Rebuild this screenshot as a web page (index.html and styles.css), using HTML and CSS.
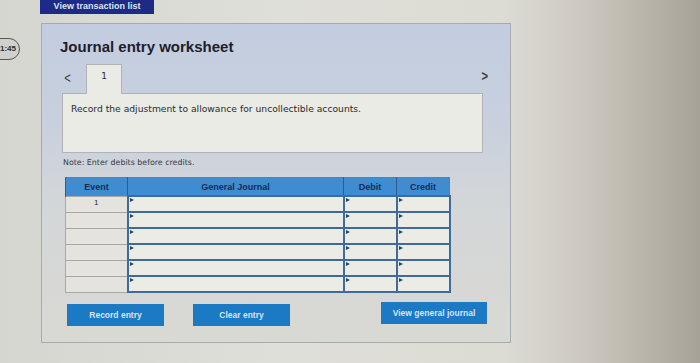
FILE: index.html
```html
<!DOCTYPE html>
<html lang="en">
<head>
  <meta charset="UTF-8">
  <meta name="viewport" content="width=device-width, initial-scale=1.0">
  <title>Journal entry worksheet</title>
  <link rel="stylesheet" href="styles.css">
</head>
<body>
  <div class="topbar">
    <button class="btn-dark">View transaction list</button>
  </div>
  <div class="timer">1:45</div>
  <div class="panel">
    <div class="panel-head">
      <h2>Journal entry worksheet</h2>
      <div class="tabs">
        <span class="arrow">&lt;</span>
        <span class="tab">1</span>
        <span class="arrow next">&gt;</span>
      </div>
    </div>
    <div class="task">Record the adjustment to allowance for uncollectible accounts.</div>
    <div class="panel-body">
      <p class="note">Note: Enter debits before credits.</p>
      <table class="journal">
        <thead>
          <tr><th class="c-event">Event</th><th class="c-gj">General Journal</th><th class="c-amt">Debit</th><th class="c-amt">Credit</th></tr>
        </thead>
        <tbody id="rows"></tbody>
      </table>
      <div class="actions">
        <button class="btn">Record entry</button>
        <button class="btn">Clear entry</button>
        <button class="btn right">View general journal</button>
      </div>
    </div>
  </div>
  <script>
    const rows = document.getElementById("rows");
    for (let i = 0; i < 6; i++) {
      rows.innerHTML += `
        <tr>
          <td class="event">${i === 0 ? "1" : ""}</td>
          <td class="input"><div class="field"></div></td>
          <td class="input"><div class="field"></div></td>
          <td class="input"><div class="field"></div></td>
        </tr>`;
    }
  </script>
</body>
</html>
```

FILE: styles.css
```css
body {
  margin: 0;
  padding: 0;
  font-family: "DejaVu Sans", Verdana, sans-serif;
  color: #2b2b33;
  height: 363px;
  overflow: hidden;
  position: relative;
  background: linear-gradient(to right, #d6d6d0 0%, #dfdfd9 40%, #dcdbd4 72%, #cbc7be 84%, #a7a297 100%);
}
.topbar {
  display: flow-root;
  padding-left: 40px;
  height: 23px;
}
.btn-dark {
  display: block;
  width: 114px;
  height: 22px;
  margin-top: -8px;
  padding: 6px 0 0;
  border: none;
  background-color: #1d2a86;
  color: #dfe3f2;
  font-family: "Liberation Sans", Arial, sans-serif;
  font-weight: bold;
  font-size: 9px;
}
.timer {
  position: absolute;
  left: -14px;
  top: 38px;
  width: 29px;
  height: 20px;
  border: 1px solid #55555a;
  border-radius: 11px;
  background-color: #d0d0cc;
  font-family: "Liberation Sans", Arial, sans-serif;
  font-size: 8px;
  font-weight: bold;
  line-height: 20px;
  text-align: right;
  padding-right: 3px;
  box-sizing: content-box;
}
.panel {
  margin-left: 41px;
  width: 470px;
  height: 320px;
  border: 1px solid #a6aab2;
  box-sizing: border-box;
  background: linear-gradient(to bottom, #c3cde0 0%, #c8d0de 30%, #d3d6d9 55%, #d9d9d3 100%);
}
.panel-head {
  height: 69px;
  padding: 0 0 0 18px;
}
.panel-head h2 {
  margin: 0;
  padding-top: 14px;
  font-family: "Liberation Sans", Arial, sans-serif;
  font-size: 15px;
  font-weight: bold;
  color: #1e1e2a;
}
.tabs {
  display: flex;
  align-items: flex-end;
  margin-top: 8px;
  height: 30px;
}
.arrow {
  font-family: "Liberation Sans", Arial, sans-serif;
  font-size: 14px;
  color: #3a3a44;
  width: 24px;
  padding-left: 2px;
  align-self: center;
  transform: scaleX(0.8);
}
.tab {
  width: 36px;
  height: 30px;
  margin-bottom: -1px;
  background-color: #ebebe5;
  border: 1px solid #b0b2b4;
  border-bottom: none;
  box-sizing: border-box;
  font-size: 9px;
  text-align: center;
  padding-top: 6px;
  position: relative;
  z-index: 1;
}
.arrow.next {
  margin-left: auto;
  margin-right: 21px;
  width: auto;
  align-self: center;
  margin-bottom: 4px;
  font-weight: bold;
}
.task {
  margin-left: 20px;
  width: 421px;
  height: 60px;
  box-sizing: border-box;
  background-color: #ebebe5;
  border: 1px solid #b0b2b4;
  padding: 9px 0 0 8px;
  font-size: 9.2px;
  color: #2a2a30;
}
.panel-body {
  padding: 0 0 0 21px;
}
.note {
  margin: 5px 0 0;
  font-size: 7.9px;
  color: #3a3a40;
}
.journal {
  margin-top: 10px;
  margin-left: 2px;
  border-collapse: collapse;
  width: 380px;
  table-layout: fixed;
  border: 1px solid #6a7c90;
}
.journal th {
  height: 17px;
  padding: 0;
  background-color: #3e8cd2;
  color: #1a2a55;
  font-family: "Liberation Sans", Arial, sans-serif;
  font-size: 9px;
  font-weight: bold;
  border-left: 1px solid #2a5d92;
}
.c-event { width: 61px; }
.c-gj { width: 215px; }
.c-amt { width: 52px; }
.journal td {
  padding: 0;
  height: 14px;
}
.journal td.event {
  background-color: #e4e3dd;
  border: 1px solid #a6a8aa;
  text-align: center;
  vertical-align: top;
  font-family: "Liberation Sans", Arial, sans-serif;
  font-size: 8px;
  padding-top: 1px;
  box-sizing: border-box;
}
.journal td.input {
  border: 2px solid #3e6b9c;
  background-color: #ecece6;
  position: relative;
}
.field::before {
  content: "";
  position: absolute;
  left: 1px;
  top: 1px;
  border-left: 4px solid #24446e;
  border-top: 2px solid transparent;
  border-bottom: 2px solid transparent;
}
.actions {
  display: flex;
  gap: 29px;
  margin-top: 11px;
  padding-right: 23px;
}
.btn {
  width: 97px;
  height: 22px;
  border: none;
  background-color: #1c79c4;
  color: #d8e4f0;
  font-family: "Liberation Sans", Arial, sans-serif;
  font-size: 8.5px;
  font-weight: bold;
  padding: 0;
  margin-left: 4px;
}
.btn + .btn { margin-left: 0; }
.btn.right {
  width: 106px;
  margin-left: auto;
  margin-top: -2px;
}
```
